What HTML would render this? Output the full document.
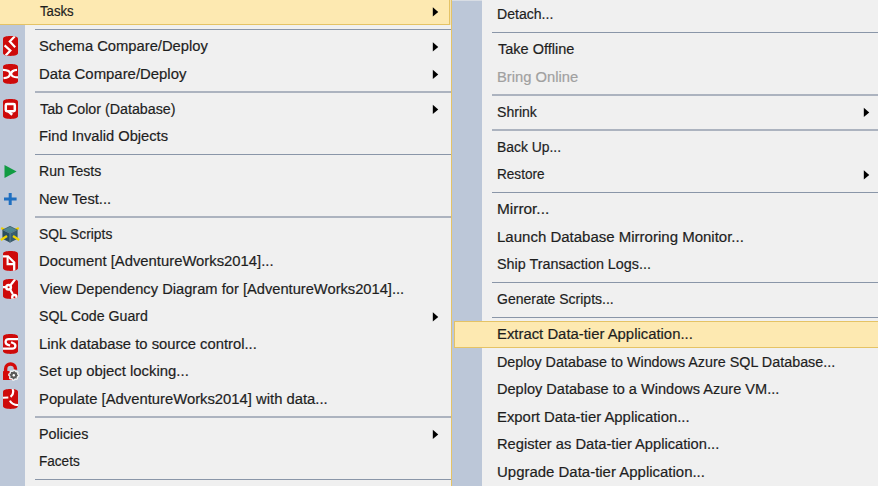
<!DOCTYPE html><html><head><meta charset="utf-8"><style>
*{margin:0;padding:0;box-sizing:border-box}
html,body{width:878px;height:486px;overflow:hidden;background:#F0F0F0}
.t{position:absolute;font-family:"Liberation Sans",sans-serif;font-size:15.5px;line-height:20px;white-space:pre;transform-origin:0 0;-webkit-text-stroke:0.2px currentColor}
.sep{position:absolute}
.arr{position:absolute;width:0;height:0;border-left:5.5px solid #000;border-top:4.75px solid transparent;border-bottom:4.75px solid transparent}
.abs{position:absolute}
</style></head><body>
<div class="abs" style="left:0;top:25px;width:25px;height:461px;background:#BCC7D8"></div>
<div class="abs" style="left:-2px;top:-3px;width:452px;height:28px;background:#FDE9B1;border:1px solid #E5C365"></div>
<svg class="abs" style="left:0;top:0" width="25" height="486" viewBox="0 0 25 486"><defs><clipPath id="c36"><path d="M3,39 C3,36.9 6,36.1 10.5,36.1 C15,36.1 18,36.9 18,39 V53 C18,55.1 15,55.9 10.5,55.9 C6,55.9 3,55.1 3,53 Z"/></clipPath><clipPath id="c64"><path d="M3,67 C3,64.9 6,64.1 10.5,64.1 C15,64.1 18,64.9 18,67 V81 C18,83.1 15,83.9 10.5,83.9 C6,83.9 3,83.1 3,81 Z"/></clipPath><clipPath id="c99"><path d="M3,102 C3,99.9 6,99.1 10.5,99.1 C15,99.1 18,99.9 18,102 V116 C18,118.1 15,118.9 10.5,118.9 C6,118.9 3,118.1 3,116 Z"/></clipPath><clipPath id="c251"><path d="M3,254 C3,251.9 6,251.1 10.5,251.1 C15,251.1 18,251.9 18,254 V268 C18,270.1 15,270.9 10.5,270.9 C6,270.9 3,270.1 3,268 Z"/></clipPath><clipPath id="c279"><path d="M3,282 C3,279.9 6,279.1 10.5,279.1 C15,279.1 18,279.9 18,282 V296 C18,298.1 15,298.9 10.5,298.9 C6,298.9 3,298.1 3,296 Z"/></clipPath><clipPath id="c334"><path d="M3,337 C3,334.9 6,334.1 10.5,334.1 C15,334.1 18,334.9 18,337 V351 C18,353.1 15,353.9 10.5,353.9 C6,353.9 3,353.1 3,351 Z"/></clipPath><clipPath id="c389"><path d="M3,392 C3,389.9 6,389.1 10.5,389.1 C15,389.1 18,389.9 18,392 V406 C18,408.1 15,408.9 10.5,408.9 C6,408.9 3,408.1 3,406 Z"/></clipPath></defs><path d="M3,39 C3,36.9 6,36.1 10.5,36.1 C15,36.1 18,36.9 18,39 V53 C18,55.1 15,55.9 10.5,55.9 C6,55.9 3,55.1 3,53 Z" fill="#CE0A0A"/><g clip-path="url(#c36)" stroke="#fff" fill="none"><path d="M14.8,36.2 L9.8,41.6 L15.2,47.2" stroke-width="2.2"/><path d="M4.6,45.4 L10.4,50.6 L5.6,55.6" stroke-width="2.2"/></g><path d="M3,67 C3,64.9 6,64.1 10.5,64.1 C15,64.1 18,64.9 18,67 V81 C18,83.1 15,83.9 10.5,83.9 C6,83.9 3,83.1 3,81 Z" fill="#CE0A0A"/><g clip-path="url(#c64)" stroke="#fff" fill="none"><path d="M2,69.8 C8.5,69.6 10.2,72 10,74 C9.8,76.5 7.5,78 3.5,78.2" stroke-width="2.3"/><path d="M17,69.8 C13,70 11,72 11.2,74 C11.4,76 14,77.5 19,77.4" stroke-width="2.3"/></g><path d="M3,102 C3,99.9 6,99.1 10.5,99.1 C15,99.1 18,99.9 18,102 V116 C18,118.1 15,118.9 10.5,118.9 C6,118.9 3,118.1 3,116 Z" fill="#CE0A0A"/><g clip-path="url(#c99)" stroke="#fff" fill="none"><rect x="5.8" y="104.0" width="9" height="7.3" rx="1.2" stroke-width="2.5"/><path d="M8.4,111.4 L12.2,114.8" stroke-width="2.5"/></g><path d="M4.5,165 L4.5,178 L16.6,171.5 Z" fill="#119C43"/><rect x="4" y="197.5" width="12.6" height="3" fill="#1F6FC0"/><rect x="8.7" y="193" width="3" height="12" fill="#1F6FC0"/><path d="M1.2,228 L4.6,229.8" stroke="#F0D000" stroke-width="2.2"/><path d="M18.8,228 L15.4,229.8" stroke="#F0D000" stroke-width="2.2"/><path d="M10,226.3 L17.2,229.9 L10,233.5 L2.8,229.9 Z" fill="#4E8792" stroke="#2A4A58" stroke-width="0.6"/><path d="M2.8,229.9 L10,233.5 L10,242.2 L2.8,238.6 Z" fill="#2C4F60" stroke="#22404E" stroke-width="0.6"/><path d="M10,233.5 L17.2,229.9 L17.2,238.6 L10,242.2 Z" fill="#385E70" stroke="#22404E" stroke-width="0.6"/><path d="M10,233.6 L10,242" stroke="#7A9CB0" stroke-width="0.8"/><path d="M3.2,230 L10,233.4 L16.8,230" stroke="#7FA3B2" stroke-width="0.6" fill="none"/><path d="M7,236 L0.8,240" stroke="#F2D400" stroke-width="2.3"/><path d="M13,236 L19.2,240" stroke="#F2D400" stroke-width="2.3"/><path d="M3,254 C3,251.9 6,251.1 10.5,251.1 C15,251.1 18,251.9 18,254 V268 C18,270.1 15,270.9 10.5,270.9 C6,270.9 3,270.1 3,268 Z" fill="#CE0A0A"/><g clip-path="url(#c251)" stroke="#fff" fill="none"><path d="M2,256.3 L8,256.3 L14.2,262.5 L14.2,272" stroke-width="2.3"/><path d="M7.6,256.3 L7.6,264.1 L14,264.1" stroke-width="2.1"/></g><path d="M3,282 C3,279.9 6,279.1 10.5,279.1 C15,279.1 18,279.9 18,282 V296 C18,298.1 15,298.9 10.5,298.9 C6,298.9 3,298.1 3,296 Z" fill="#CE0A0A"/><g clip-path="url(#c279)" stroke="#fff" fill="none"><circle cx="8.6" cy="287.3" r="2.3" stroke-width="2.5"/><path d="M10.3,285.5 L15.5,278.8" stroke-width="2.2"/><path d="M2,287 L6.3,287.2" stroke-width="2.2"/><path d="M10,289.3 L12.8,294" stroke-width="2.2"/><circle cx="14.4" cy="297.2" r="2.2" stroke-width="2.3"/></g><path d="M3,337 C3,334.9 6,334.1 10.5,334.1 C15,334.1 18,334.9 18,337 V351 C18,353.1 15,353.9 10.5,353.9 C6,353.9 3,353.1 3,351 Z" fill="#CE0A0A"/><g clip-path="url(#c334)" stroke="#fff" fill="none"><path d="M19,339.1 L8.8,339.1 C4.8,339.1 4.6,343.6 8,344.8 L10,345.6" stroke-width="2.3"/><path d="M2,348.6 L12.2,348.6 C16.2,348.6 16.4,344.2 13,343 L11,342.2" stroke-width="2.3"/></g><path d="M5.6,372 L5.6,369 C5.6,362.4 15.5,362.4 15.5,369 L15.5,369.8" stroke="#D40A0A" stroke-width="3.4" fill="none"/><rect x="3" y="371" width="10" height="9" rx="0.5" fill="#D40A0A"/><path d="M13.80,370.20 L14.78,370.30 L15.41,371.32 L16.13,371.71 L17.34,371.66 L17.96,372.42 L17.68,373.59 L17.92,374.38 L18.80,375.20 L18.70,376.18 L17.68,376.81 L17.29,377.53 L17.34,378.74 L16.58,379.36 L15.41,379.08 L14.62,379.32 L13.80,380.20 L12.82,380.10 L12.19,379.08 L11.47,378.69 L10.26,378.74 L9.64,377.98 L9.92,376.81 L9.68,376.02 L8.80,375.20 L8.90,374.22 L9.92,373.59 L10.31,372.87 L10.26,371.66 L11.02,371.04 L12.19,371.32 L12.98,371.08 Z" fill="#5A5A5A" stroke="#EEF0F2" stroke-width="1.4"/><circle cx="13.8" cy="375.2" r="1.2" fill="#fff"/><path d="M3,392 C3,389.9 6,389.1 10.5,389.1 C15,389.1 18,389.9 18,392 V406 C18,408.1 15,408.9 10.5,408.9 C6,408.9 3,408.1 3,406 Z" fill="#CE0A0A"/><g clip-path="url(#c389)" stroke="#fff" fill="none"><path d="M12.6,388.5 C13.8,392 13,395 10.6,396.8" stroke-width="2.2"/><path d="M2,397.7 L8.3,397.5" stroke-width="2"/><path d="M9.9,400.6 C11,403 13.5,405 19,405.2" stroke-width="2.2"/></g></svg>
<div class="abs" style="left:450px;top:0;width:1px;height:25px;background:#F0E2B9"></div>
<div class="sep" style="left:35px;top:29px;width:416px;height:1px;background:#8A96A8"></div>
<div class="sep" style="left:35px;top:91px;width:416px;height:2px;background:#ACB3BF"></div>
<div class="sep" style="left:35px;top:154px;width:416px;height:1px;background:#8A96A8"></div>
<div class="sep" style="left:35px;top:216px;width:416px;height:2px;background:#ACB3BF"></div>
<div class="sep" style="left:35px;top:416px;width:416px;height:2px;background:#ACB3BF"></div>
<div class="sep" style="left:35px;top:479px;width:416px;height:1px;background:#8A96A8"></div>
<div class="t" style="left:39.50px;top:1px;color:#1E1E1E;transform:scaleX(0.8487)">Tasks</div>

<div class="t" style="left:38.55px;top:36px;color:#1E1E1E;transform:scaleX(0.9514)">Schema Compare/Deploy</div>

<div class="t" style="left:38.54px;top:64px;color:#1E1E1E;transform:scaleX(0.9612)">Data Compare/Deploy</div>

<div class="t" style="left:39.50px;top:99px;color:#1E1E1E;transform:scaleX(0.9197)">Tab Color (Database)</div>

<div class="t" style="left:38.55px;top:126px;color:#1E1E1E;transform:scaleX(0.9481)">Find Invalid Objects</div>
<div class="t" style="left:38.59px;top:161px;color:#1E1E1E;transform:scaleX(0.9075)">Run Tests</div>
<div class="t" style="left:38.56px;top:189px;color:#1E1E1E;transform:scaleX(0.9432)">New Test...</div>
<div class="t" style="left:38.61px;top:224px;color:#1E1E1E;transform:scaleX(0.8926)">SQL Scripts</div>
<div class="t" style="left:38.54px;top:251px;color:#1E1E1E;transform:scaleX(0.9564)">Document [AdventureWorks2014]...</div>
<div class="t" style="left:39.50px;top:279px;color:#1E1E1E;transform:scaleX(0.9470)">View Dependency Diagram for [AdventureWorks2014]...</div>
<div class="t" style="left:38.59px;top:306px;color:#1E1E1E;transform:scaleX(0.9137)">SQL Code Guard</div>

<div class="t" style="left:38.55px;top:334px;color:#1E1E1E;transform:scaleX(0.9540)">Link database to source control...</div>
<div class="t" style="left:38.54px;top:361px;color:#1E1E1E;transform:scaleX(0.9604)">Set up object locking...</div>
<div class="t" style="left:38.54px;top:389px;color:#1E1E1E;transform:scaleX(0.9553)">Populate [AdventureWorks2014] with data...</div>
<div class="t" style="left:38.58px;top:424px;color:#1E1E1E;transform:scaleX(0.9250)">Policies</div>

<div class="t" style="left:38.62px;top:451px;color:#1E1E1E;transform:scaleX(0.8756)">Facets</div>
<div class="abs" style="left:451px;top:0;width:427px;height:486px;background:#F0F0F0;border-left:1px solid #E5C365"></div>
<div class="abs" style="left:452px;top:1px;width:30px;height:485px;background:#BCC7D8"></div>
<div class="abs" style="left:452px;top:0;width:30px;height:1px;background:#D8DDE4"></div>
<div class="sep" style="left:492px;top:32px;width:386px;height:1px;background:#8A96A8"></div>
<div class="sep" style="left:492px;top:94px;width:386px;height:2px;background:#ACB3BF"></div>
<div class="sep" style="left:492px;top:129px;width:386px;height:2px;background:#ACB3BF"></div>
<div class="sep" style="left:492px;top:192px;width:386px;height:1px;background:#8A96A8"></div>
<div class="sep" style="left:492px;top:282px;width:386px;height:1px;background:#8A96A8"></div>
<div class="sep" style="left:492px;top:317px;width:386px;height:1px;background:#8A96A8"></div>
<div class="abs" style="left:454px;top:321px;width:430px;height:27px;background:#FDE9B1;border:1px solid #E5C365"></div>
<div class="t" style="left:496.59px;top:4px;color:#1E1E1E;transform:scaleX(0.9083)">Detach...</div>
<div class="t" style="left:497.50px;top:39px;color:#1E1E1E;transform:scaleX(0.9358)">Take Offline</div>
<div class="t" style="left:496.55px;top:67px;color:#A0A0A0;transform:scaleX(0.9512)">Bring Online</div>
<div class="t" style="left:496.59px;top:102px;color:#1E1E1E;transform:scaleX(0.9070)">Shrink</div>

<div class="t" style="left:496.60px;top:137px;color:#1E1E1E;transform:scaleX(0.8957)">Back Up...</div>
<div class="t" style="left:496.62px;top:164px;color:#1E1E1E;transform:scaleX(0.8755)">Restore</div>

<div class="t" style="left:496.51px;top:199px;color:#1E1E1E;transform:scaleX(0.9940)">Mirror...</div>
<div class="t" style="left:496.53px;top:227px;color:#1E1E1E;transform:scaleX(0.9680)">Launch Database Mirroring Monitor...</div>
<div class="t" style="left:496.57px;top:254px;color:#1E1E1E;transform:scaleX(0.9256)">Ship Transaction Logs...</div>
<div class="t" style="left:496.60px;top:289px;color:#1E1E1E;transform:scaleX(0.9031)">Generate Scripts...</div>
<div class="t" style="left:496.54px;top:324px;color:#1E1E1E;transform:scaleX(0.9589)">Extract Data-tier Application...</div>
<div class="t" style="left:496.57px;top:352px;color:#1E1E1E;transform:scaleX(0.9251)">Deploy Database to Windows Azure SQL Database...</div>
<div class="t" style="left:496.56px;top:379px;color:#1E1E1E;transform:scaleX(0.9389)">Deploy Database to a Windows Azure VM...</div>
<div class="t" style="left:496.54px;top:407px;color:#1E1E1E;transform:scaleX(0.9593)">Export Data-tier Application...</div>
<div class="t" style="left:496.55px;top:434px;color:#1E1E1E;transform:scaleX(0.9483)">Register as Data-tier Application...</div>
<div class="t" style="left:496.53px;top:462px;color:#1E1E1E;transform:scaleX(0.9653)">Upgrade Data-tier Application...</div>
<svg class="abs" style="left:0;top:0" width="878" height="486" fill="#000"><path d="M432.8,7.35 L438.25,11.95 L432.8,16.55 Z"/><path d="M432.8,42.35 L438.25,46.95 L432.8,51.55 Z"/><path d="M432.8,69.85 L438.25,74.45 L432.8,79.05 Z"/><path d="M432.8,104.85 L438.25,109.45 L432.8,114.05 Z"/><path d="M432.8,312.35 L438.25,316.95 L432.8,321.55 Z"/><path d="M432.8,429.85 L438.25,434.45 L432.8,439.05 Z"/><path d="M863.8,107.85 L869.25,112.45 L863.8,117.05 Z"/><path d="M863.8,170.35 L869.25,174.95 L863.8,179.55 Z"/></svg>
</body></html>
